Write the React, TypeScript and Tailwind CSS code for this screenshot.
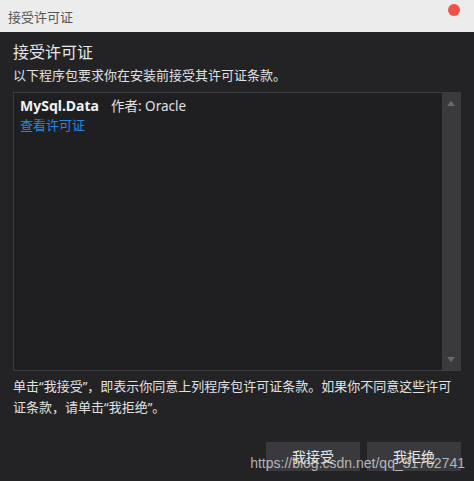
import React from 'react';

const font = { fontFamily: '"Noto Sans", "Noto Sans CJK SC", sans-serif' };

const App: React.FC = () => {
  return (
    <div
      className="relative flex h-[481px] w-[474px] flex-col overflow-hidden bg-[#232326]"
      style={font}
    >
      {/* title bar */}
      <div className="flex h-[32px] shrink-0 items-start justify-between bg-[#ececec] pl-[8px] pr-[14px]">
        <span className="mt-[7px] text-[13px] leading-[20px] text-[#555555]">接受许可证</span>
        <span className="mt-[4px] h-[12px] w-[12px] rounded-full bg-[#f0524a]" />
      </div>

      <div className="flex flex-1 flex-col px-[13px] pt-[9px]">
        <h1 className="text-[16px] leading-[22px] text-[#e6e6e6]">接受许可证</h1>
        <p className="mt-[3px] text-[13px] leading-[18px] text-[#e0e0e0]">
          以下程序包要求你在安装前接受其许可证条款。
        </p>

        {/* package list */}
        <div className="mt-[8px] flex h-[279px] w-[448px] border border-[#3c3c40] bg-[#1f1f22]">
          <div className="flex-1 px-[6px] pt-[3px]">
            <div className="flex items-baseline gap-[12px] leading-[20px]">
              <span className="text-[14px] font-bold text-[#f2f2f2]">MySql.Data</span>
              <span className="text-[13.5px] text-[#e0e0e0]">作者: Oracle</span>
            </div>
            <a className="block text-[13px] leading-[18px] text-[#1f8ae0]">查看许可证</a>
          </div>
          <div className="flex w-[18px] flex-col items-center justify-between bg-[#3a3a3d] py-[8px]">
            <svg width="8" height="5" viewBox="0 0 8 5">
              <path d="M0 5 L4 0 L8 5 Z" fill="#6a6a6e" />
            </svg>
            <svg width="8" height="5" viewBox="0 0 8 5">
              <path d="M0 0 L4 5 L8 0 Z" fill="#6a6a6e" />
            </svg>
          </div>
        </div>

        <p className="mt-[5px] w-[448px] text-[13px] leading-[21px] text-[#e0e0e0]">
          单击“我接受”，即表示你同意上列程序包许可证条款。如果你不同意这些许可证条款，请单击“我拒绝”。
        </p>

        <div className="mt-auto mb-[10px] flex justify-end gap-[7px]">
          <button className="h-[29px] w-[94px] bg-[#3a3a3e] text-[14px] text-[#e6e6e6]">我接受</button>
          <button className="h-[29px] w-[94px] bg-[#3a3a3e] text-[14px] text-[#e6e6e6]">我拒绝</button>
        </div>
      </div>

      {/* watermark */}
      <span
        className="absolute right-[9px] bottom-[9px] text-[14px] leading-[18px] text-[#d8d8d8]/80"
        style={{ fontFamily: '"Liberation Sans", Arial, sans-serif' }}
      >
        https://blog.csdn.net/qq_31762741
      </span>
    </div>
  );
};

export default App;
